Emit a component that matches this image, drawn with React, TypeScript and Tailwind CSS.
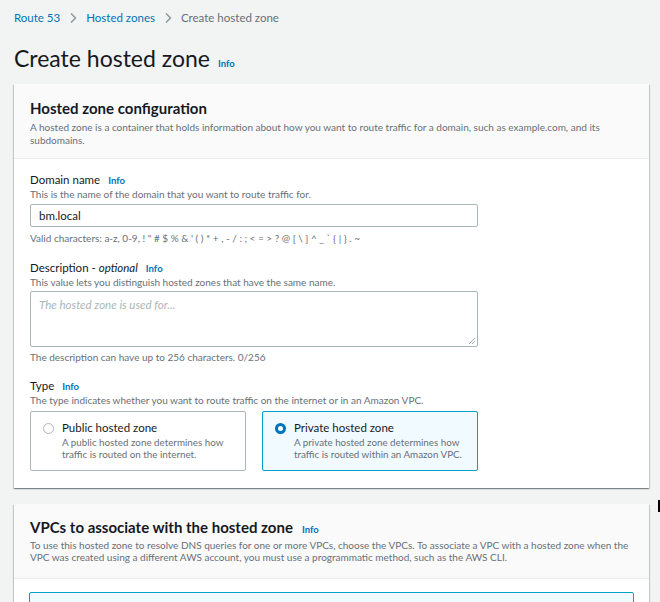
import React from "react";

const font = "font-['Lato','Open_Sans',sans-serif]";

const Info = ({ className = "" }: { className?: string }) => (
  <span className={`text-[9.5px] font-bold leading-none text-[#0073bb] ${className}`}>Info</span>
);

const Chevron = () => (
  <svg width="8" height="12" viewBox="0 0 8 12" className="mx-[9px]">
    <path d="M2 1.5 L6.5 6 L2 10.5" fill="none" stroke="#879596" strokeWidth="1.4" />
  </svg>
);

const RadioCard = ({
  title,
  desc,
  selected,
}: {
  title: string;
  desc: React.ReactNode;
  selected?: boolean;
}) => (
  <div
    className={`flex gap-[8px] h-[60px] rounded-[2px] border pl-[12px] pr-[4px] pt-[9px] ${
      selected ? "border-[#00a1c9] bg-[#f1faff]" : "border-[#aab7b8] bg-white"
    }`}
  >
    <div className="pt-[2px]">
      {selected ? (
        <div className="h-[11px] w-[11px] rounded-full border-[3px] border-[#0073bb] bg-white" />
      ) : (
        <div className="h-[11px] w-[11px] rounded-full border border-[#aab7b8] bg-white" />
      )}
    </div>
    <div>
      <div className="text-[11.5px] leading-[14px] text-[#16191f]">{title}</div>
      <div className="mt-[1px] whitespace-nowrap text-[9.8px] leading-[12px] text-[#687078]">{desc}</div>
    </div>
  </div>
);

export default function App() {
  return (
    <div className={`relative min-h-screen bg-[#f2f3f3] pl-[14px] pr-[11px] ${font}`}>
      {/* breadcrumbs */}
      <div className="flex h-[35px] items-center text-[11.5px]">
        <span className="text-[#0073bb]">Route 53</span>
        <Chevron />
        <span className="text-[#0073bb]">Hosted zones</span>
        <Chevron />
        <span className="text-[#687078]">Create hosted zone</span>
      </div>

      {/* title */}
      <div className="mt-[8px] flex h-[30px] items-baseline gap-[8px]">
        <h1 className="text-[23px] leading-[30px] text-[#16191f]">Create hosted zone</h1>
        <Info />
      </div>

      {/* configuration card */}
      <div className="mt-[11px] bg-white shadow-[0_1px_1px_0_rgba(0,28,36,0.3),1px_1px_1px_0_rgba(0,28,36,0.15),-1px_1px_1px_0_rgba(0,28,36,0.15)]">
        <div className="border-b border-[#eaeded] bg-[#fafafa] px-[16px] pt-[14px] pb-[11px]">
          <h2 className="text-[15px] font-bold leading-[20px] text-[#16191f]">Hosted zone configuration</h2>
          <p className="mt-[3px] text-[10px] leading-[13px] text-[#687078]">
            A hosted zone is a container that holds information about how you want to route traffic for a domain, such as example.com, and its
            <br />
            subdomains.
          </p>
        </div>

        <div className="w-[480px] px-[16px] pt-[14px] pb-[17px]">
          {/* domain name */}
          <div className="flex h-[14px] items-baseline gap-[8px]">
            <span className="text-[11.5px] leading-[14px] text-[#16191f]">Domain name</span>
            <Info />
          </div>
          <p className="mt-[1px] text-[10px] leading-[12px] text-[#687078]">
            This is the name of the domain that you want to route traffic for.
          </p>
          <div className="mt-[4px] flex h-[23px] items-center rounded-[2px] border border-[#aab7b8] bg-white px-[8px] text-[11.5px] text-[#16191f]">
            bm.local
          </div>
          <p className="mt-[5px] text-[10px] leading-[12px] text-[#687078]">
            Valid characters: a-z, 0-9, ! " # $ % &amp; ' ( ) * + , - / : ; &lt; = &gt; ? @ [ \ ] ^ _ ` {"{"} | {"}"} . ~
          </p>

          {/* description */}
          <div className="mt-[17px] flex h-[14px] items-baseline gap-[8px]">
            <span className="text-[11.5px] leading-[14px] text-[#16191f]">
              Description - <i>optional</i>
            </span>
            <Info />
          </div>
          <p className="mt-[1px] text-[10px] leading-[12px] text-[#687078]">
            This value lets you distinguish hosted zones that have the same name.
          </p>
          <div className="relative mt-[3px] h-[56px] rounded-[2px] border border-[#aab7b8] bg-white px-[8px] pt-[4px] text-[11.5px] italic text-[#aab7b8]">
            The hosted zone is used for...
            <svg width="6" height="6" viewBox="0 0 6 6" className="absolute right-[2px] bottom-[2px]">
              <path d="M6 0 L0 6 M6 3 L3 6" stroke="#879596" strokeWidth="0.8" />
            </svg>
          </div>
          <p className="mt-[4px] text-[10px] leading-[12px] text-[#687078]">
            The description can have up to 256 characters. 0/256
          </p>

          {/* type */}
          <div className="mt-[16px] flex h-[14px] items-baseline gap-[8px]">
            <span className="text-[11.5px] leading-[14px] text-[#16191f]">Type</span>
            <Info />
          </div>
          <p className="mt-[1px] text-[10px] leading-[12px] text-[#687078]">
            The type indicates whether you want to route traffic on the internet or in an Amazon VPC.
          </p>
          <div className="mt-[5px] grid grid-cols-2 gap-[16px]">
            <RadioCard
              title="Public hosted zone"
              desc={
                <>
                  A public hosted zone determines how
                  <br />
                  traffic is routed on the internet.
                </>
              }
            />
            <RadioCard
              selected
              title="Private hosted zone"
              desc={
                <>
                  A private hosted zone determines how
                  <br />
                  traffic is routed within an Amazon VPC.
                </>
              }
            />
          </div>
        </div>
      </div>

      {/* VPC card */}
      <div className="mt-[16px] bg-white shadow-[0_1px_1px_0_rgba(0,28,36,0.3),1px_1px_1px_0_rgba(0,28,36,0.15),-1px_1px_1px_0_rgba(0,28,36,0.15)]">
        <div className="border-b border-[#eaeded] bg-[#fafafa] px-[16px] pt-[13px] pb-[15px]">
          <div className="flex h-[20px] items-baseline gap-[9px]">
            <h2 className="text-[15px] font-bold leading-[20px] text-[#16191f]">VPCs to associate with the hosted zone</h2>
            <Info />
          </div>
          <p className="mt-[2px] text-[10px] leading-[12px] text-[#687078]">
            To use this hosted zone to resolve DNS queries for one or more VPCs, choose the VPCs. To associate a VPC with a hosted zone when the
            <br />
            VPC was created using a different AWS account, you must use a programmatic method, such as the AWS CLI.
          </p>
        </div>
        <div className="px-[15px] pt-[13px] pb-[16px]">
          <div className="h-[60px] rounded-[2px] border border-[#00a1c9] bg-[#f1faff]" />
        </div>
      </div>

      {/* mouse cursor */}
      <div className="absolute left-[658px] top-[500px] h-[12px] w-[2px] bg-black" />
    </div>
  );
}
